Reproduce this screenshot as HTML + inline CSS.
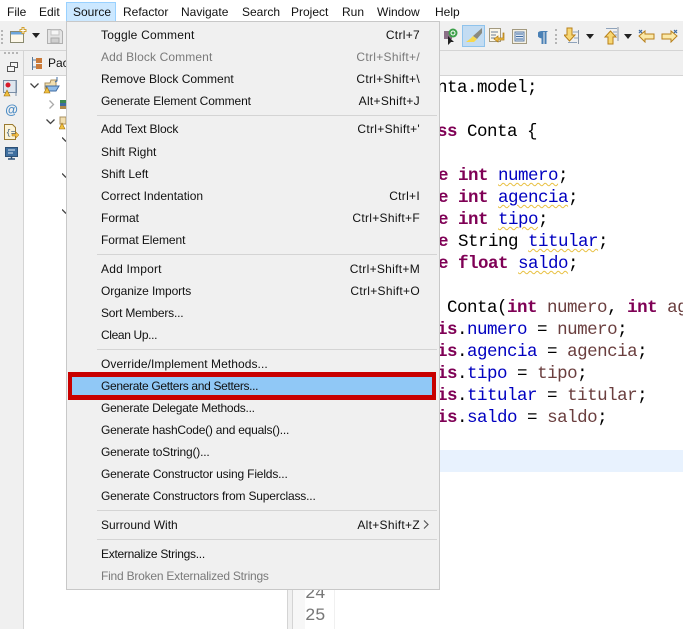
<!DOCTYPE html>
<html><head><meta charset="utf-8">
<style>
html,body{margin:0;padding:0}
body{width:683px;height:629px;position:relative;overflow:hidden;background:#fff;font-family:"Liberation Sans",sans-serif;font-size:12px;color:#111}
div,span.a,svg.a{position:absolute}
.m{top:0;height:21px;line-height:24px;white-space:nowrap}
.c{font-family:"Liberation Mono",monospace;font-size:17.5px;letter-spacing:-.5px;line-height:22px;height:22px;white-space:pre;color:#000}
.k{color:#7f0055;font-weight:bold}
.f{color:#0000c0}
.v{color:#6a3e3e}
.w{color:#0000c0;text-decoration:underline wavy #e8c040 1px;text-underline-offset:2px}
.i{left:101px;height:22px;line-height:22px;white-space:nowrap}
.s{right:263px;height:22px;line-height:22px;white-space:nowrap;letter-spacing:.3px}
.d{color:#7a7a7a}
.h{left:97px;width:340px;height:1px;background:#d4d4d4}
.n{font-family:"Liberation Mono",monospace;font-size:17.5px;letter-spacing:-.5px;color:#787878;left:305px;height:22px;line-height:22px}
</style></head><body>

<!-- menu bar -->
<div style="left:0;top:0;width:683px;height:21px;background:#fff"></div>
<div class="m" style="left:7px">File</div>
<div class="m" style="left:39px">Edit</div>
<div style="left:66px;top:2px;width:48px;height:18px;background:#cce8ff;border:1px solid #99d1ff"></div>
<div class="m" style="left:73px">Source</div>
<div class="m" style="left:123px">Refactor</div>
<div class="m" style="left:181px">Navigate</div>
<div class="m" style="left:242px">Search</div>
<div class="m" style="left:291px">Project</div>
<div class="m" style="left:342px">Run</div>
<div class="m" style="left:377px">Window</div>
<div class="m" style="left:435px">Help</div>

<!-- toolbar -->
<div style="left:0;top:21px;width:683px;height:29px;background:#f0f0f0;border-bottom:1px solid #d4d4d4"></div>
<div style="left:1px;top:30px;width:0;height:14px;border-left:2px dotted #b5b5b5"></div>
<svg class="a" style="left:10px;top:27px" width="17" height="17" viewBox="0 0 17 17"><rect x=".5" y="4.500" width="13" height="11" fill="#fdf8ea" stroke="#8a8a70"/><rect x="1" y="5" width="12" height="2.500" fill="#6ea6dc"/><path d="M12 .5h2v2h2v2h-2v2h-2v-2h-2v-2h2z" fill="#fff" stroke="#d0a030"/></svg>
<svg class="a" style="left:32px;top:33px" width="8" height="5"><path d="M0 0h8L4 5z" fill="#222"/></svg>
<svg class="a" style="left:47px;top:29px" width="16" height="15"><path d="M.5.500h13l2 2v12H.5z" fill="#e4e4e4" stroke="#b0b0b0"/><rect x="4" y="1" width="8" height="5" fill="#f6f6f6" stroke="#c4c4c4"/><rect x="4" y="9" width="8" height="5" fill="#cfcfcf" stroke="#aaa"/></svg>

<svg class="a" style="left:443px;top:28px" width="16" height="17"><rect x="1" y="3" width="8" height="8" fill="#8a6f86"/><path d="M5 8v9l3-3h3z" fill="#222"/><circle cx="10" cy="5" r="4.500" fill="#3da04a"/><circle cx="10" cy="5" r="2" fill="none" stroke="#fff"/></svg>
<div style="left:462px;top:25px;width:21px;height:20px;background:#c3dcf2;border:1px solid #8fc3ec"></div>
<svg class="a" style="left:465px;top:27px" width="18" height="18"><path d="M17 1L8 9l4 3 5-6z" fill="#8a8a80"/><path d="M8 9l4 3-3 3H1l4-3z" fill="#f6d84e"/></svg>
<svg class="a" style="left:489px;top:28px" width="16" height="16"><rect x=".5" y=".5" width="11" height="13" fill="#fbf7ea" stroke="#a39a80"/><path d="M2 4h7M2 7h5M2 10h4" stroke="#6e7f97"/><path d="M14 5v5H9V8l-4 3 4 3v-2h6V5z" fill="#f2c04a" stroke="#b07a10" stroke-width=".7"/></svg>
<svg class="a" style="left:512px;top:29px" width="15" height="15"><rect x=".5" y=".5" width="14" height="14" fill="#f4f1e6" stroke="#a39a80"/><rect x="3" y="3" width="9" height="9" fill="#dfe8f4" stroke="#5f7fa8"/><path d="M4 5h7M4 7.500h7M4 10h7" stroke="#3f6ba0"/></svg>
<svg class="a" style="left:538px;top:31px" width="10" height="13"><path d="M4 .5h5.500M4 .5C1 .5 0 2 0 3.500S1 7 4 7z" fill="#4a80b5" stroke="#4a80b5"/><path d="M4.500 0v13M7.500 0v13" stroke="#4a80b5" stroke-width="2"/></svg>
<div style="left:555px;top:29px;width:0;height:15px;border-left:2px dotted #b5b5b5"></div>
<svg class="a" style="left:564px;top:27px" width="16" height="18"><path d="M3 1h5v7h3L5.500 14 0 8h3z" fill="#f7d774" stroke="#b8801a"/><path d="M9 5h5M10 11h4M4 15.500h9" stroke="#8fa3bb"/><path d="M14.500 3v14" stroke="#8a96a6"/></svg>
<svg class="a" style="left:586px;top:34px" width="8" height="5"><path d="M0 0h8L4 5z" fill="#222"/></svg>
<svg class="a" style="left:603px;top:27px" width="16" height="18"><path d="M5 17h5v-7h3L7.500 4 2 10h3z" fill="#f7d774" stroke="#b8801a"/><path d="M3 1.500h11M10 5h4M12 8h2" stroke="#8fa3bb"/><path d="M15 0v14" stroke="#8a96a6"/></svg>
<svg class="a" style="left:624px;top:34px" width="8" height="5"><path d="M0 0h8L4 5z" fill="#222"/></svg>
<svg class="a" style="left:638px;top:29px" width="17" height="14"><path d="M1 7l6-5v3h9v5H7v3z" fill="#fbe9a8" stroke="#b8801a"/><path d="M1 1l3 3M4 1L1 4" stroke="#3f6ba0" stroke-width="1.200"/></svg>
<svg class="a" style="left:661px;top:29px" width="17" height="14"><path d="M16 7l-6-5v3H1v5h9v3z" fill="#fbe9a8" stroke="#b8801a"/><path d="M13 1l3 3M16 1l-3 3" stroke="#3f6ba0" stroke-width="1.200"/></svg>

<!-- left trim -->
<div style="left:0;top:51px;width:23px;height:578px;background:#f0f0f0;border-right:1px solid #d4d4d4"></div>
<div style="left:4px;top:52px;width:14px;height:0;border-top:2px dotted #b5b5b5"></div>
<svg class="a" style="left:7px;top:62px" width="11" height="10"><rect x="3.500" y=".5" width="7" height="5" fill="#f5f5f5" stroke="#555"/><rect x=".5" y="4.500" width="7" height="5" fill="#f5f5f5" stroke="#555"/></svg>
<svg class="a" style="left:3px;top:80px" width="16" height="17"><rect x=".5" y=".5" width="13" height="12" fill="#dfe6ee" stroke="#7a8ea6"/><circle cx="5" cy="5" r="2.500" fill="#d81a2a"/><path d="M4 10l3 6H1z" fill="#f0c040" stroke="#a07010" stroke-width=".6"/><path d="M13 1v15" stroke="#7a8ea6"/></svg>
<div style="left:5px;top:101px;font-size:13px;font-style:italic;font-weight:bold;color:#4a8bc4;line-height:17px">@</div>
<svg class="a" style="left:4px;top:124px" width="15" height="16"><path d="M.5.500h8l3 3V15.500H.5z" fill="#fbf3d8" stroke="#9a7a30"/><text x="2" y="11" font-size="8" font-family="Liberation Mono" fill="#36567a">{=</text><path d="M8 10h4V8l3 3-3 3v-2H8z" fill="#f2c04a" stroke="#b07a10" stroke-width=".5"/></svg>
<svg class="a" style="left:5px;top:147px" width="13" height="13"><rect x=".5" y=".5" width="12" height="9" fill="#3f6f9f" stroke="#2d5075"/><path d="M3 3h7M3 6h5" stroke="#dbe7f3"/><path d="M3 12h7M6.500 10v2" stroke="#2d5075" stroke-width="1.500"/></svg>

<!-- package explorer -->
<div style="left:24px;top:51px;width:263px;height:24px;background:#f0f0f0;border-bottom:1px solid #d4d4d4"></div>
<svg class="a" style="left:32px;top:57px" width="10" height="13"><path d="M.5 0v13M0 3h4M0 10h4" stroke="#5a7a9a"/><rect x="4" y="1" width="6" height="5" fill="#c97a3a"/><rect x="4" y="7" width="6" height="5" fill="#c97a3a"/></svg>
<div style="left:48px;top:55px;line-height:17px">Pac</div>
<div style="left:287px;top:51px;width:1px;height:578px;background:#d4d4d4"></div>
<div style="left:288px;top:51px;width:4px;height:578px;background:#f0f0f0"></div>
<div style="left:292px;top:51px;width:1px;height:578px;background:#d4d4d4"></div>
<div style="left:293px;top:51px;width:12px;height:578px;background:#f7f7f7"></div>

<svg class="a" style="left:30px;top:83px" width="9" height="6"><path d="M.5.500l4 4 4-4" fill="none" stroke="#444" stroke-width="1.300"/></svg>
<svg class="a" style="left:43px;top:76px" width="17" height="18"><path d="M2 7h5l1-3h5v9H2z" fill="#f2dfb0" stroke="#a99060"/><path d="M3 10h13l-3 5H4z" fill="#8fbbe8" stroke="#3f6ba0"/><path d="M14 1v4l-2 1" fill="none" stroke="#3f6ba0"/><path d="M4 11l3 6H1z" fill="#f0c040" stroke="#a07010" stroke-width=".6"/></svg>
<svg class="a" style="left:49px;top:100px" width="6" height="9"><path d="M.5.500l4 4-4 4" fill="none" stroke="#aaa" stroke-width="1.300"/></svg>
<div style="left:60px;top:100px;width:6px;height:3px;background:#3a8a50"></div>
<div style="left:60px;top:103px;width:6px;height:3px;background:#3f6ba0"></div>
<div style="left:60px;top:106px;width:6px;height:3px;background:#b08a4a"></div>
<svg class="a" style="left:46px;top:119px" width="9" height="6"><path d="M.5.500l4 4 4-4" fill="none" stroke="#444" stroke-width="1.300"/></svg>
<svg class="a" style="left:59px;top:116px" width="7" height="14"><rect x="1" y="1" width="6" height="7" fill="#f2dfb0" stroke="#a99060"/><path d="M3 7l3 6H0z" fill="#f0c040" stroke="#a07010" stroke-width=".6"/></svg>
<svg class="a" style="left:62px;top:137px" width="5" height="6"><path d="M0 .5l4 4" stroke="#444" stroke-width="1.300"/></svg>
<svg class="a" style="left:62px;top:173px" width="5" height="6"><path d="M0 .5l4 4" stroke="#444" stroke-width="1.300"/></svg>
<svg class="a" style="left:62px;top:209px" width="5" height="6"><path d="M0 .5l4 4" stroke="#444" stroke-width="1.300"/></svg>

<!-- editor -->
<div style="left:440px;top:51px;width:243px;height:24px;background:#f0f0f0;border-bottom:1px solid #d4d4d4"></div>
<div style="left:440px;top:450px;width:243px;height:22px;background:#e8f2fe"></div>
<div class="c" style="left:437px;top:77px">nta.model;</div>
<div class="c" style="left:427px;top:121px"><span class="k">ass</span> Conta {</div>
<div class="c" style="left:418px;top:165px"><span class="k">ate int</span> <span class="w">numero</span>;</div>
<div class="c" style="left:418px;top:187px"><span class="k">ate int</span> <span class="w">agencia</span>;</div>
<div class="c" style="left:418px;top:209px"><span class="k">ate int</span> <span class="w">tipo</span>;</div>
<div class="c" style="left:418px;top:231px"><span class="k">ate</span> String <span class="w">titular</span>;</div>
<div class="c" style="left:418px;top:253px"><span class="k">ate float</span> <span class="w">saldo</span>;</div>
<div class="c" style="left:447px;top:297px;width:236px;overflow:hidden">Conta(<span class="k">int</span> <span class="v">numero</span>, <span class="k">int</span> <span class="v">ag</span></div>
<div class="c" style="left:417px;top:319px"><span class="k">this</span>.<span class="f">numero</span> = <span class="v">numero</span>;</div>
<div class="c" style="left:417px;top:341px"><span class="k">this</span>.<span class="f">agencia</span> = <span class="v">agencia</span>;</div>
<div class="c" style="left:417px;top:363px"><span class="k">this</span>.<span class="f">tipo</span> = <span class="v">tipo</span>;</div>
<div class="c" style="left:417px;top:385px"><span class="k">this</span>.<span class="f">titular</span> = <span class="v">titular</span>;</div>
<div class="c" style="left:417px;top:407px"><span class="k">this</span>.<span class="f">saldo</span> = <span class="v">saldo</span>;</div>
<div class="n" style="top:583px">24</div>
<div class="n" style="top:605px">25</div>
<div style="left:334px;top:590px;width:1px;height:39px;background:#f0f0f0"></div>

<!-- source menu -->
<div style="left:66px;top:21px;width:372px;height:567px;background:#f0f0f0;border:1px solid #c8c8c8"></div>
<div style="left:68px;top:372px;width:360px;height:18px;background:#90c8f6;border:5px solid #c80000;border-width:5px 4px"></div>

<div class="h" style="top:115px"></div>
<div class="h" style="top:254px"></div>
<div class="h" style="top:349px"></div>
<div class="h" style="top:510px"></div>
<div class="h" style="top:539px"></div>

<div class="i" style="top:24px;letter-spacing:.2px">Toggle Comment</div><div class="s" style="top:24px">Ctrl+7</div>
<div class="i d" style="top:46px;letter-spacing:.12px">Add Block Comment</div><div class="s d" style="top:46px">Ctrl+Shift+/</div>
<div class="i" style="top:68px">Remove Block Comment</div><div class="s" style="top:68px">Ctrl+Shift+\</div>
<div class="i" style="top:90px;letter-spacing:-.12px">Generate Element Comment</div><div class="s" style="top:90px">Alt+Shift+J</div>
<div class="i" style="top:118px;letter-spacing:-.14px">Add Text Block</div><div class="s" style="top:118px">Ctrl+Shift+'</div>
<div class="i" style="top:141px">Shift Right</div>
<div class="i" style="top:163px">Shift Left</div>
<div class="i" style="top:185px">Correct Indentation</div><div class="s" style="top:185px">Ctrl+I</div>
<div class="i" style="top:207px">Format</div><div class="s" style="top:207px">Ctrl+Shift+F</div>
<div class="i" style="top:229px;letter-spacing:-.07px">Format Element</div>
<div class="i" style="top:258px;letter-spacing:.2px">Add Import</div><div class="s" style="top:258px">Ctrl+Shift+M</div>
<div class="i" style="top:280px;letter-spacing:-.12px">Organize Imports</div><div class="s" style="top:280px">Ctrl+Shift+O</div>
<div class="i" style="top:302px;letter-spacing:-.2px">Sort Members...</div>
<div class="i" style="top:324px;letter-spacing:-.36px">Clean Up...</div>
<div class="i" style="top:353px;letter-spacing:.07px">Override/Implement Methods...</div>
<div class="i" style="top:375px;letter-spacing:-.33px">Generate Getters and Setters...</div>
<div class="i" style="top:397px;letter-spacing:-.25px">Generate Delegate Methods...</div>
<div class="i" style="top:419px;letter-spacing:-.23px">Generate hashCode() and equals()...</div>
<div class="i" style="top:441px;letter-spacing:-.19px">Generate toString()...</div>
<div class="i" style="top:463px;letter-spacing:-.17px">Generate Constructor using Fields...</div>
<div class="i" style="top:485px;letter-spacing:-.17px">Generate Constructors from Superclass...</div>
<div class="i" style="top:514px">Surround With</div><div class="s" style="top:514px">Alt+Shift+Z</div>
<svg class="a" style="left:423px;top:520px" width="6" height="9"><path d="M1 .5l4 4-4 4" fill="none" stroke="#555" stroke-width="1.200"/></svg>
<div class="i" style="top:543px;letter-spacing:-.28px">Externalize Strings...</div>
<div class="i d" style="top:565px;letter-spacing:-.22px">Find Broken Externalized Strings</div>
</body></html>
